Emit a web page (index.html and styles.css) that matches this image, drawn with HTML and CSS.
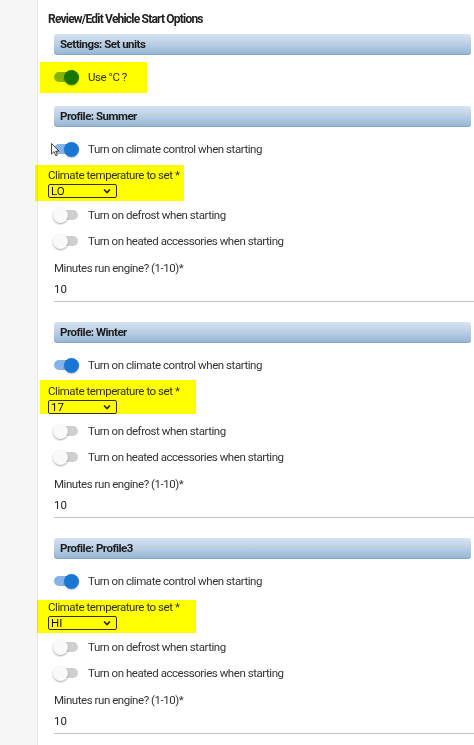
FILE: index.html
```html
<!DOCTYPE html>
<html>
<head>
<meta charset="utf-8">
<link rel="stylesheet" href="styles.css">
</head>
<body>
<div class="page">
  <aside class="sidebar"></aside>
  <main class="main">
    <h1 class="title">Review/Edit Vehicle Start Options</h1>

    <section class="section settings">
      <div class="header">Settings: Set units</div>
      <div class="row hl hl-a">
        <span class="toggle on"><span class="knob"></span></span>
        <span class="row-label">Use °C ?</span>
      </div>
    </section>

    <section class="section">
      <div class="header">Profile: Summer</div>
      <div class="row cursor-row">
        <span class="toggle on"><span class="knob"></span></span>
        <span class="row-label">Turn on climate control when starting</span>
        <svg class="cursor" width="9" height="14" viewBox="0 0 9 14"><path d="M0.5 0.5 L0.5 11 L3 8.6 L4.8 12.8 L6.4 12.1 L4.7 8.1 L8 8.1 Z" fill="#fff" stroke="#333" stroke-width="0.9" stroke-linejoin="round"/></svg>
      </div>
      <div class="temp hl hl-b">
        <div class="temp-label">Climate temperature to set *</div>
        <div class="select"><span class="select-value">LO</span><svg class="chev" width="8" height="6" viewBox="0 0 8 6"><path d="M1 1.5 L4 4.5 L7 1.5" fill="none" stroke="#222" stroke-width="1.6"/></svg></div>
      </div>
      <div class="row">
        <span class="toggle"><span class="knob"></span></span>
        <span class="row-label">Turn on defrost when starting</span>
      </div>
      <div class="row">
        <span class="toggle"><span class="knob"></span></span>
        <span class="row-label">Turn on heated accessories when starting</span>
      </div>
      <div class="field">
        <div class="field-label">Minutes run engine? (1-10)*</div>
        <div class="field-value">10</div>
      </div>
    </section>

    <section class="section">
      <div class="header">Profile: Winter</div>
      <div class="row">
        <span class="toggle on"><span class="knob"></span></span>
        <span class="row-label">Turn on climate control when starting</span>
      </div>
      <div class="temp hl hl-c">
        <div class="temp-label">Climate temperature to set *</div>
        <div class="select"><span class="select-value">17</span><svg class="chev" width="8" height="6" viewBox="0 0 8 6"><path d="M1 1.5 L4 4.5 L7 1.5" fill="none" stroke="#222" stroke-width="1.6"/></svg></div>
      </div>
      <div class="row">
        <span class="toggle"><span class="knob"></span></span>
        <span class="row-label">Turn on defrost when starting</span>
      </div>
      <div class="row">
        <span class="toggle"><span class="knob"></span></span>
        <span class="row-label">Turn on heated accessories when starting</span>
      </div>
      <div class="field">
        <div class="field-label">Minutes run engine? (1-10)*</div>
        <div class="field-value">10</div>
      </div>
    </section>

    <section class="section">
      <div class="header">Profile: Profile3</div>
      <div class="row">
        <span class="toggle on"><span class="knob"></span></span>
        <span class="row-label">Turn on climate control when starting</span>
      </div>
      <div class="temp hl hl-d">
        <div class="temp-label">Climate temperature to set *</div>
        <div class="select"><span class="select-value">HI</span><svg class="chev" width="8" height="6" viewBox="0 0 8 6"><path d="M1 1.5 L4 4.5 L7 1.5" fill="none" stroke="#222" stroke-width="1.6"/></svg></div>
      </div>
      <div class="row">
        <span class="toggle"><span class="knob"></span></span>
        <span class="row-label">Turn on defrost when starting</span>
      </div>
      <div class="row">
        <span class="toggle"><span class="knob"></span></span>
        <span class="row-label">Turn on heated accessories when starting</span>
      </div>
      <div class="field">
        <div class="field-label">Minutes run engine? (1-10)*</div>
        <div class="field-value">10</div>
      </div>
    </section>
  </main>
</div>
</body>
</html>
```

FILE: styles.css
```css
* { box-sizing: border-box; }
html, body { margin: 0; padding: 0; background: #fff; }
body {
  font-family: Roboto, "Liberation Sans", Arial, sans-serif;
  color: #333;
  width: 474px;
  height: 745px;
  overflow: hidden;
}
.page {
  display: flex;
  min-height: 745px;
}
.sidebar {
  width: 38px;
  flex: none;
  background: #f6f6f6;
  border-right: 1px solid #e6e6e6;
}
.main {
  flex: 1;
  padding-left: 10px;
  min-width: 0;
}
.title {
  margin: 0;
  padding-top: 11px;
  font-size: 12px;
  line-height: 16px;
  font-weight: 700;
  color: #222;
  letter-spacing: -0.8px;
}
.section {
  margin-left: 6px;
  margin-right: 0;
}
.settings { margin-top: 7px; }
.header {
  height: 21px;
  line-height: 21px;
  margin-right: 3px;
  padding-left: 6px;
  border-radius: 3px;
  font-size: 11.5px;
  font-weight: 700;
  letter-spacing: -0.5px;
  color: #1c1c1c;
  background: linear-gradient(to bottom, #d6e4f1 0%, #b9cfe4 50%, #97b7d6 100%);
  border-bottom: 1px solid #85a7c8;
}
.row {
  height: 26px;
  display: flex;
  align-items: center;
  gap: 10px;
  font-size: 11.5px;
  letter-spacing: -0.45px;
  color: #333;
}
.header + .row { margin-top: 9px; }
.settings .row { margin-bottom: 16px; }
.row-label { white-space: nowrap; }
.toggle {
  position: relative;
  width: 24px;
  height: 10px;
  border-radius: 5px;
  background: #cfcfcf;
  flex: none;
}
.toggle .knob {
  position: absolute;
  top: -2.5px;
  left: -1px;
  width: 15px;
  height: 15px;
  border-radius: 50%;
  background: #fafafa;
  box-shadow: 0 1px 2px rgba(0,0,0,0.35);
}
.toggle.on { background: #86b4e6; }
.toggle.on .knob {
  left: 10px;
  background: #1976d2;
  box-shadow: 0 1px 2px rgba(0,0,0,0.25);
}
.cursor-row { position: relative; }
.cursor {
  position: absolute;
  left: -3px;
  top: 7px;
}
.temp {
  margin-left: -6px;
  padding-top: 6px;
  margin-bottom: 4px;
}
.temp-label {
  font-size: 11.5px;
  line-height: 14px;
  letter-spacing: -0.45px;
  color: #333;
}
.select {
  margin-top: 2px;
  width: 69px;
  height: 14px;
  border: 1px solid #333;
  border-radius: 2px;
  background: #fff;
  display: flex;
  align-items: center;
  justify-content: space-between;
  padding: 0 5px 0 2px;
  color: #111;
}
.select-value {
  font-size: 11.5px;
  line-height: 12px;
}
.field { margin-top: 7px; margin-bottom: 20px; }
.field-label {
  font-size: 11.5px;
  line-height: 14px;
  letter-spacing: -0.45px;
  color: #333;
}
.field-value {
  margin-top: 7px;
  font-size: 11.5px;
  line-height: 14px;
  color: #222;
  padding-bottom: 5px;
  border-bottom: 1px solid #c4c4c4;
}
.hl { position: relative; }
.hl::after {
  content: "";
  position: absolute;
  background: #ffff00;
  mix-blend-mode: multiply;
  pointer-events: none;
}
.hl-a::after { left: -14px; top: -2px; width: 107px; height: 31px; }
.hl-b::after { left: -13px; top: 3px; width: 149px; height: 36px; }
.hl-c::after { left: -8px; top: 2px; width: 156px; height: 34px; }
.hl-d::after { left: -11px; top: 6px; width: 159px; height: 33px; }
```
